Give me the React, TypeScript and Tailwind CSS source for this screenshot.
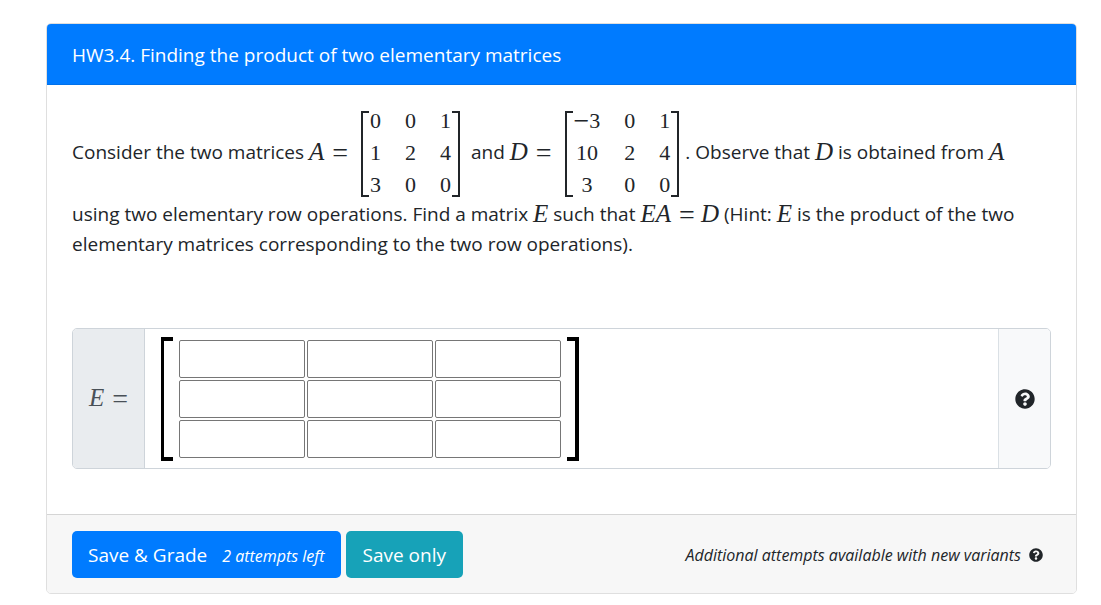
import React from 'react';
import { FaQuestionCircle } from 'react-icons/fa';

interface MatrixProps {
  label: string;
  rows: string[][];
}

const MathText: React.FC<{ children: React.ReactNode }> = ({ children }) => (
  <span className="align-[-1px] font-['Liberation_Serif',serif] text-[25px] leading-5 whitespace-nowrap">
    {children}
  </span>
);

const Equals: React.FC = () => <span className="ml-2 align-[-2px] text-[28px] leading-5">=</span>;

const Matrix: React.FC<MatrixProps> = ({ label, rows }) => (
  <span
    role="math"
    aria-label={label}
    className="relative mr-1.5 ml-2 inline-flex px-[9px] pb-0.5 align-middle font-['Liberation_Serif',serif] text-[22px]"
  >
    <span className="absolute inset-y-0.5 left-0 w-2 border-2 border-r-0 border-[#212529]" />
    <span className="grid grid-cols-[repeat(3,auto)] gap-x-6 gap-y-2 text-center leading-6">
      {rows.flat().map((value, i) => (
        <span key={i}>
          {value.startsWith('−') && <span className="align-[-2px] text-[28px] leading-5">−</span>}
          {value.replace('−', '')}
        </span>
      ))}
    </span>
    <span className="absolute inset-y-0.5 right-0 w-2 border-2 border-l-0 border-[#212529]" />
  </span>
);

const matrixA = [
  ['0', '0', '1'],
  ['1', '2', '4'],
  ['3', '0', '0'],
];

const matrixD = [
  ['−3', '0', '1'],
  ['10', '2', '4'],
  ['3', '0', '0'],
];

const AnswerMatrix: React.FC = () => (
  <div className="flex h-[124px] gap-1.5">
    <div className="w-3 border-y-4 border-l-[3px] border-black" />
    <div className="grid grid-cols-[repeat(3,126px)] content-center gap-0.5">
      {[1, 2, 3].map((row) =>
        [1, 2, 3].map((col) => (
          <input
            key={`${row}-${col}`}
            type="text"
            aria-label={`E row ${row} column ${col}`}
            className="h-[38px] w-full rounded-xs border border-[#767676] bg-white px-1"
          />
        ))
      )}
    </div>
    <div className="w-3 border-y-4 border-r-4 border-black" />
  </div>
);

const App: React.FC = () => {
  return (
    <main className="min-h-screen bg-white pt-[23px] pr-6 pl-[46px] font-['Open_Sans',sans-serif] text-[19px] leading-[30px] text-[#212529]">
      <form className="overflow-hidden rounded-[5px] border border-[#dfdfdf]" onSubmit={(e) => e.preventDefault()}>
        <h1 className="border-b border-[#0071eb] bg-[#007bff] px-[25px] pt-4 pb-3.5 text-white">
          HW3.4. Finding the product of two elementary matrices
        </h1>

        <div className="px-[25px] pt-6 pb-[45px]">
          <p>
            Consider the two matrices <MathText><i>A</i><Equals /></MathText>{' '}
            <Matrix label="Matrix A" rows={matrixA} /> and <MathText><i>D</i><Equals /></MathText>{' '}
            <Matrix label="Matrix D" rows={matrixD} />. Observe that <MathText><i>D</i></MathText> is obtained from{' '}
            <MathText><i>A</i></MathText> using two elementary row operations. Find a matrix{' '}
            <MathText><i>E</i></MathText> such that <MathText><i>EA</i><Equals /> <i>D</i></MathText> (Hint:{' '}
            <MathText><i>E</i></MathText> is the product of the two elementary matrices corresponding to the two row
            operations).
          </p>

          <div className="mt-[69px] flex h-[141px] rounded-[5px] border border-[#ced4da]">
            <div className="flex w-[72px] items-center justify-center rounded-l-[4px] border-r border-[#ced4da] bg-[#e9ecef] text-[#495057]">
              <MathText><i>E</i><Equals /></MathText>
            </div>
            <div className="flex flex-1 items-center pl-4">
              <AnswerMatrix />
            </div>
            <button
              type="button"
              aria-label="Help"
              className="flex w-[52px] items-center justify-center rounded-r-[4px] border-l border-[#dae0e5] bg-[#f8f9fa]"
            >
              <FaQuestionCircle className="size-5" />
            </button>
          </div>
        </div>

        <div className="flex items-center justify-between border-t border-[#d5d5d5] bg-[#f7f7f7] px-[25px] pt-4 pb-[15px]">
          <div className="flex gap-[5px]">
            <button type="submit" className="h-[47px] rounded-[5px] bg-[#007bff] px-4 text-white">
              Save &amp; Grade <i className="ml-2.5 text-[16px] leading-5">2 attempts left</i>
            </button>
            <button type="button" className="h-[47px] rounded-[5px] bg-[#17a2b8] px-[17px] text-white">
              Save only
            </button>
          </div>
          <div className="flex items-center gap-2 pr-2 text-[16px]">
            <i>Additional attempts available with new variants</i>
            <button type="button" aria-label="About new variants">
              <FaQuestionCircle className="size-3.5" />
            </button>
          </div>
        </div>
      </form>
    </main>
  );
};

export default App;
